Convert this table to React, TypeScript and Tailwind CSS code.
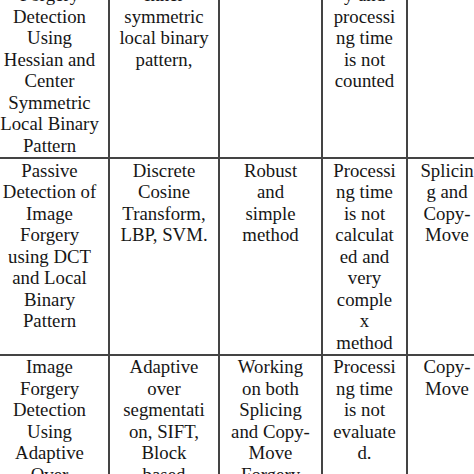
import React from 'react';

// widths include the 2px right rule of each cell
const COLS = ['w-[119px]', 'w-[110px]', 'w-[103px]', 'w-[85px]', 'w-[80px]'];

type Row = { height: string; pad: string; cells: string[][] };

const ROWS: Row[] = [
  {
    height: 'h-[199px]',
    pad: 'pt-[2.5px]',
    cells: [
      ['Image', 'Forgery', 'Detection', 'Using', 'Hessian and', 'Center', 'Symmetric', 'Local Binary', 'Pattern'],
      ['Hessian and', 'Inner', 'symmetric', 'local binary', 'pattern,'],
      [],
      ['Accurac', 'y and', 'processi', 'ng time', 'is not', 'counted'],
      [],
    ],
  },
  {
    height: 'h-[197px]',
    pad: 'pt-[0.5px]',
    cells: [
      ['Passive', 'Detection of', 'Image', 'Forgery', 'using DCT', 'and Local', 'Binary', 'Pattern'],
      ['Discrete', 'Cosine', 'Transform,', 'LBP, SVM.'],
      ['Robust', 'and', 'simple', 'method'],
      ['Processi', 'ng time', 'is not', 'calculat', 'ed and', 'very', 'comple', 'x', 'method'],
      ['Splicin', 'g and', 'Copy-', 'Move'],
    ],
  },
  {
    height: 'h-[160px]',
    pad: 'pt-0',
    cells: [
      ['Image', 'Forgery', 'Detection', 'Using', 'Adaptive', 'Over'],
      ['Adaptive', 'over', 'segmentati', 'on, SIFT,', 'Block', 'based'],
      ['Working', 'on both', 'Splicing', 'and Copy-', 'Move', 'Forgery'],
      ['Processi', 'ng time', 'is not', 'evaluate', 'd.'],
      ['Copy-', 'Move'],
    ],
  },
];

export default function App() {
  return (
    <div className="w-[474px] h-[474px] overflow-hidden bg-white">
      <div className="ml-[-9px] mt-[-40px] w-[497px] flex flex-col font-['Liberation_Serif',serif] text-[18.8px] leading-[21.5px] text-[#161616]">
        {ROWS.map((row, r) => (
          <div key={r} className={`flex shrink-0 ${row.height} ${r < ROWS.length - 1 ? 'border-b-2' : ''} border-[#444444]`}>
            {row.cells.map((lines, c) => (
              <div
                key={c}
                className={`${COLS[c]} shrink-0 h-full border-r-2 border-[#444444] text-center ${row.pad}`}
              >
                {lines.map((l, i) => (
                  <div key={i} className="whitespace-nowrap">{l}</div>
                ))}
              </div>
            ))}
          </div>
        ))}
      </div>
    </div>
  );
}
